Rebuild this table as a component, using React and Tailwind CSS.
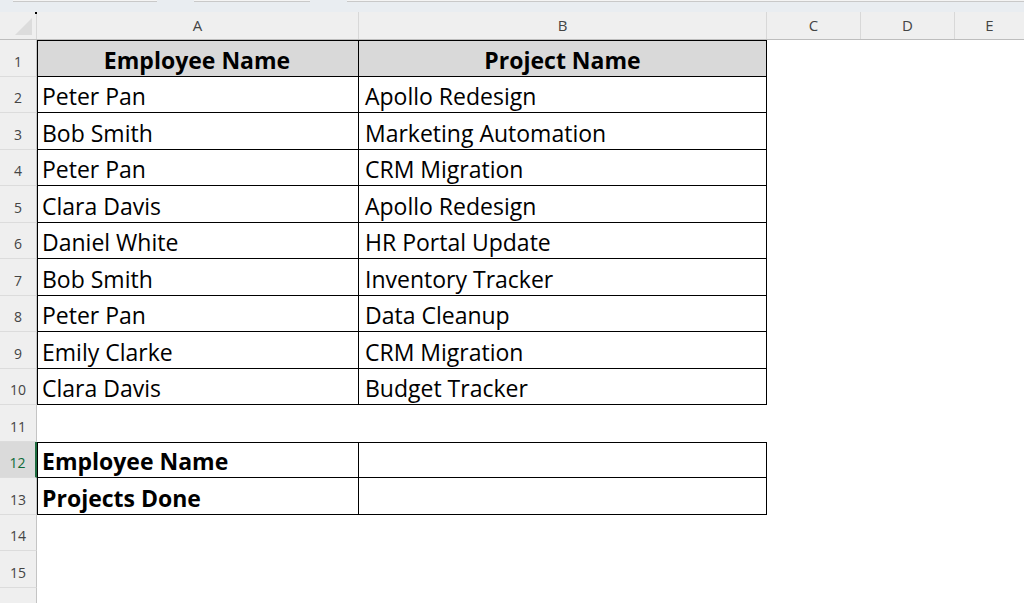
import React from "react";

const rows = [
  ["Employee Name", "Project Name"],
  ["Peter Pan", "Apollo Redesign"],
  ["Bob Smith", "Marketing Automation"],
  ["Peter Pan", "CRM Migration"],
  ["Clara Davis", "Apollo Redesign"],
  ["Daniel White", "HR Portal Update"],
  ["Bob Smith", "Inventory Tracker"],
  ["Peter Pan", "Data Cleanup"],
  ["Emily Clarke", "CRM Migration"],
  ["Clara Davis", "Budget Tracker"],
  ["", ""],
  ["Employee Name", ""],
  ["Projects Done", ""],
  ["", ""],
  ["", ""],
  ["", ""],
];

const font = { fontFamily: '"Open Sans", "Liberation Sans", sans-serif' };

function Row({ n, a, b }) {
  const bordered = (n >= 1 && n <= 10) || n === 12 || n === 13;
  const topB = n === 1 || n === 12;
  const header = n === 1;
  const boldLabel = n === 12 || n === 13;
  const selected = n === 12;
  const h = n % 2 === 1 ? "h-[37px]" : "h-[36px]";
  return (
    <div className={`flex ${h} shrink-0`}>
      <div
        className={`w-[37px] shrink-0 flex items-end justify-center pb-[5px] text-[14px] leading-[18px] border-b border-[#dcdcdc] ${
          selected
            ? "bg-[#dadada] text-[#0e6b38] border-r-2 border-r-[#1d6b3e]"
            : "bg-[#efefef] text-[#444] border-r border-r-[#c4c4c4]"
        }`}
        style={font}
      >
        {n <= 15 ? n : ""}
      </div>
      <div
        className={`w-[322px] shrink-0 flex items-end pl-[4px] pr-[6px] pb-[3px] text-[23px] leading-[26px] text-black ${
          bordered ? "border-l border-r border-b border-black" : ""
        } ${topB ? "border-t border-t-black" : ""} ${header ? "bg-[#d9d9d9] justify-center font-bold" : ""} ${
          boldLabel ? "font-bold" : ""
        }`}
        style={font}
      >
        {a}
      </div>
      <div
        className={`w-[408px] shrink-0 flex items-end pl-[6px] pr-[6px] pb-[3px] text-[23px] leading-[26px] text-black ${
          bordered ? "border-r border-b border-black" : ""
        } ${topB ? "border-t border-t-black" : ""} ${header ? "bg-[#d9d9d9] justify-center font-bold" : ""}`}
        style={font}
      >
        {b}
      </div>
      <div className="flex-1 bg-white" />
    </div>
  );
}

export default function App() {
  return (
    <div className="w-[1024px] h-[603px] overflow-hidden bg-white flex flex-col">
      <div className="h-[12px] shrink-0 bg-[#e9edf1] relative flex gap-[37px] pl-[13px]">
        <div className="w-[144px] h-[2px] bg-[#f4f4f4] border-b border-[#c9c9c9]" />
        <div className="w-[116px] h-[2px] bg-[#f4f4f4] border-b border-[#c9c9c9]" />
        <div className="flex-1 h-[2px] bg-[#f4f4f4] border-b border-[#c9c9c9]" />
      </div>
      <div className="h-[28px] shrink-0 flex bg-[#efefef] border-b border-[#bdbdbd] text-[15px] text-[#444]" style={font}>
        <div className="w-[37px] shrink-0 relative border-r border-[#d8d8d8]">
          <svg width="18" height="18" viewBox="0 0 18 18" className="absolute left-[15px] top-[6px]">
            <polygon points="17,0 17,17 0,17" fill="#dcdcdc" />
          </svg>
          <div className="absolute right-[-1px] top-0 w-[2px] h-[2px] bg-black" />
        </div>
        <div className="w-[322px] shrink-0 flex items-center justify-center border-r border-[#d8d8d8]">A</div>
        <div className="w-[408px] shrink-0 flex items-center justify-center border-r border-[#d8d8d8]">B</div>
        <div className="w-[94px] shrink-0 flex items-center justify-center border-r border-[#d8d8d8]">C</div>
        <div className="w-[94px] shrink-0 flex items-center justify-center border-r border-[#d8d8d8]">D</div>
        <div className="flex-1 flex items-center justify-center">E</div>
      </div>
      {rows.map((r, i) => (
        <Row key={i} n={i + 1} a={r[0]} b={r[1]} />
      ))}
    </div>
  );
}
